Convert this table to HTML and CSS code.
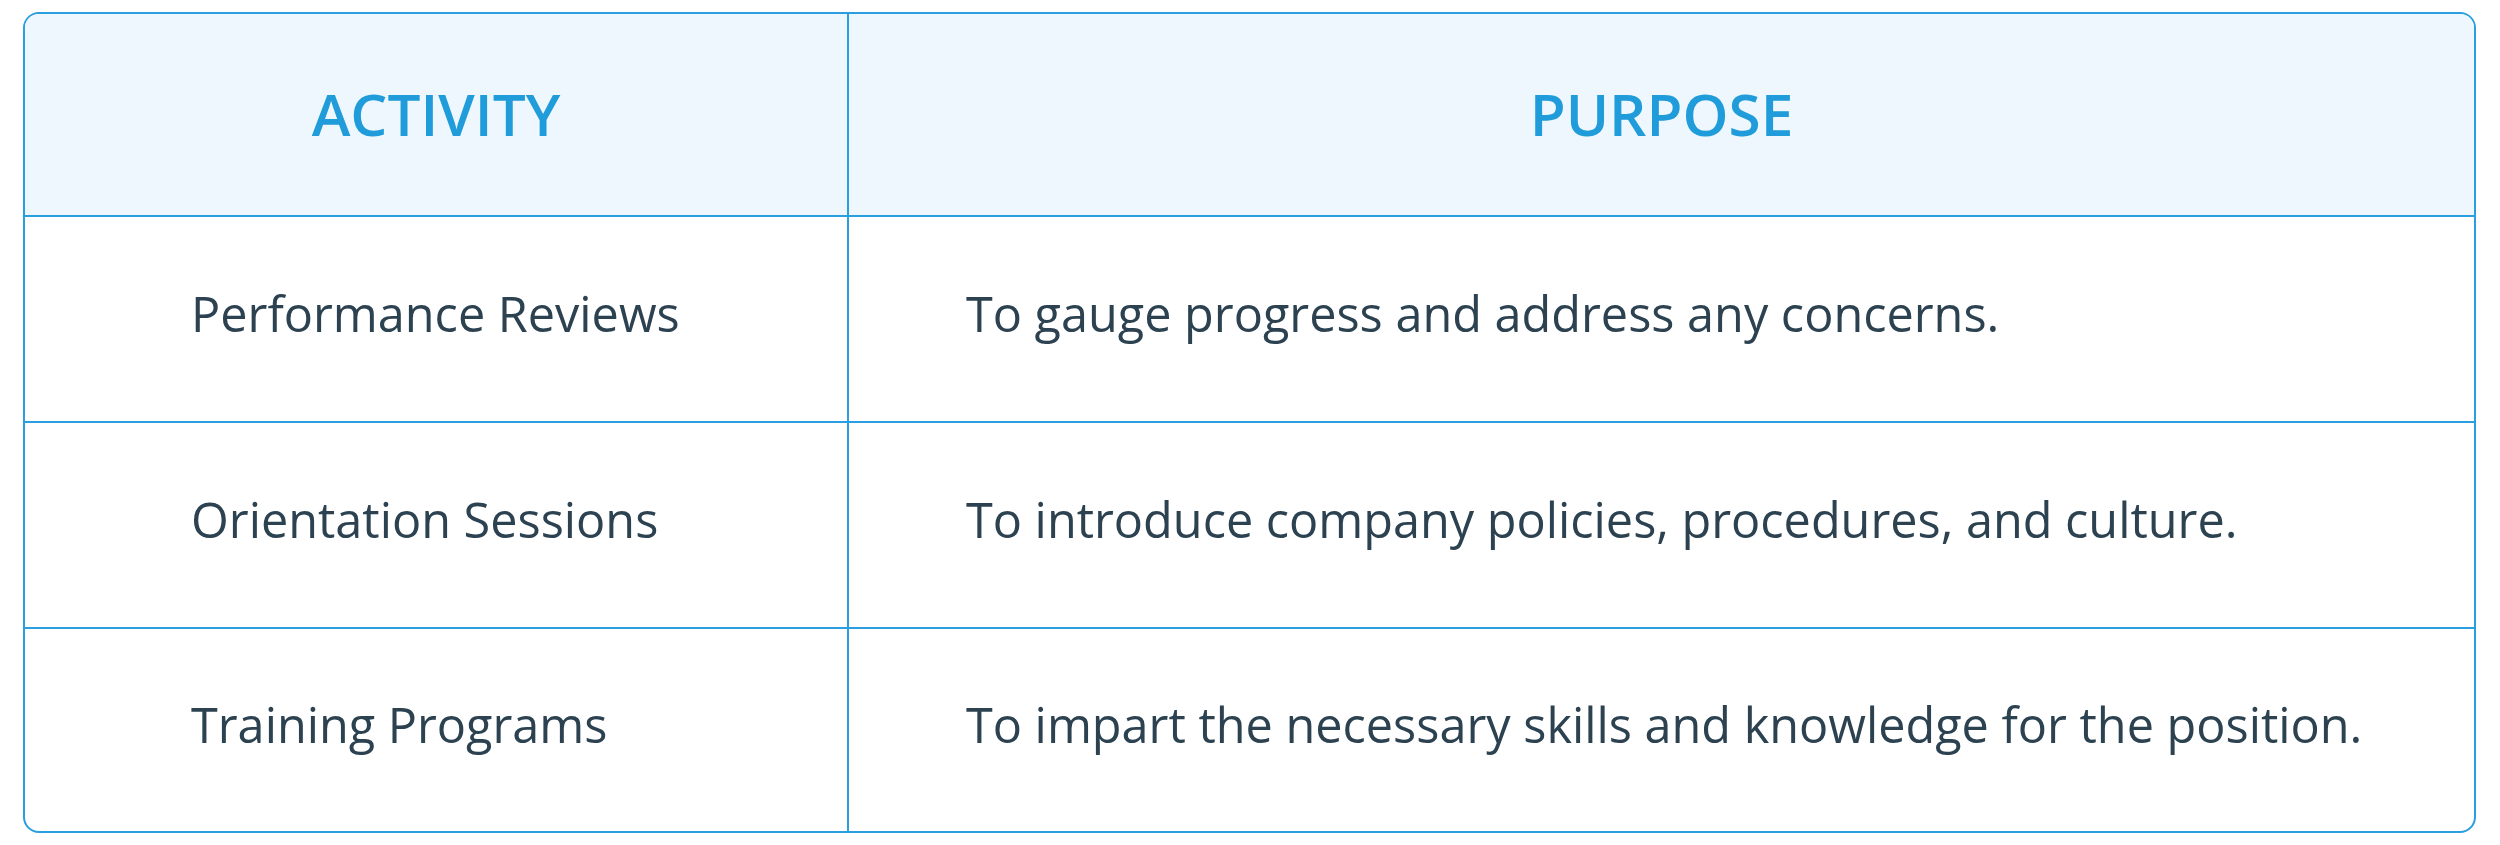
FILE: index.html
```html
<!DOCTYPE html>
<html lang="en">
<head>
<meta charset="utf-8">
<title>Activity table</title>
<link rel="stylesheet" href="styles.css">
</head>
<body>
<div class="page">
  <div class="table">
    <div class="cell head col1">ACTIVITY</div>
    <div class="cell head col2">PURPOSE</div>
    <div class="cell col1 act">Performance Reviews</div>
    <div class="cell col2 purp">To gauge progress and address any concerns.</div>
    <div class="cell col1 act">Orientation Sessions</div>
    <div class="cell col2 purp">To introduce company policies, procedures, and culture.</div>
    <div class="cell col1 act last">Training Programs</div>
    <div class="cell col2 purp last">To impart the necessary skills and knowledge for the position.</div>
  </div>
</div>
</body>
</html>
```
FILE: styles.css
```css
html, body {
  margin: 0;
  padding: 0;
  background: #ffffff;
}

.page {
  padding: 12px 0 0 23px;
}

.table {
  box-sizing: border-box;
  width: 2453px;
  height: 821px;
  border: 2px solid #2a9fdf;
  border-radius: 16px;
  overflow: hidden;
  display: grid;
  grid-template-columns: 824px 1fr;
  grid-template-rows: 203px 206px 206px 1fr;
  font-family: "Open Sans", "Liberation Sans", sans-serif;
}

.cell {
  box-sizing: border-box;
  display: flex;
  align-items: center;
  border-bottom: 2px solid #2a9fdf;
  color: #2c4251;
  font-size: 48.6px;
  padding-bottom: 12px;
}

.cell.last {
  border-bottom: none;
}

.col1 {
  border-right: 2px solid #2a9fdf;
}

.head {
  background: #eef7fd;
  color: #1f9cd9;
  font-weight: 600;
  font-size: 58.5px;
  justify-content: center;
  padding-bottom: 4px;
}

.act {
  padding-left: 166px;
}

.purp {
  padding-left: 117px;
}
```
